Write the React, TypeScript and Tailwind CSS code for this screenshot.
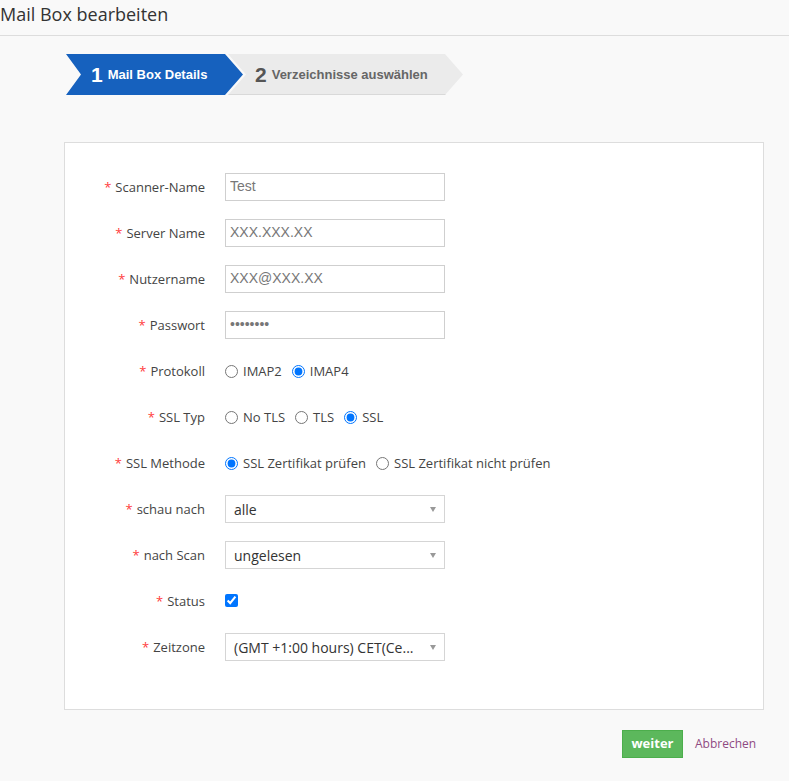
import React from "react";

const Star = () => <span className="text-[#ff3b3b] mr-[4px]">*</span>;

function Row({ label, children }: { label: string; children: React.ReactNode }) {
  return (
    <div className="flex items-center h-[28px]">
      <div className="w-[140px] text-right text-[13px] text-[#444] whitespace-nowrap pt-[2px]">
        <Star />
        {label}
      </div>
      <div className="ml-[20px] flex items-center">{children}</div>
    </div>
  );
}

function TextInput({ value, type = "text" }: { value: string; type?: string }) {
  return (
    <input
      type={type}
      defaultValue={value}
      className="w-[220px] h-[28px] border border-[#cfcfcf] bg-white px-[4px] pb-[2px] text-[14px] text-[#777] outline-none [font-family:'Liberation_Sans',Arial,sans-serif]"
    />
  );
}

function Select({ value }: { value: string }) {
  return (
    <div className="w-[220px] h-[28px] border border-[#d5d5d5] bg-white flex items-center pl-[8px] pr-[8px] text-[14px] text-[#333]">
      <span className="flex-1 truncate">{value}</span>
      <span className="w-0 h-0 border-l-[3.5px] border-r-[3.5px] border-t-[5px] border-l-transparent border-r-transparent border-t-[#999] ml-[6px]" />
    </div>
  );
}

function Radio({ label, checked }: { label: string; checked?: boolean }) {
  return (
    <label className="flex items-center mr-[10px] text-[13px] text-[#444]">
      <input type="radio" defaultChecked={checked} className="m-0 w-[13px] h-[13px] accent-[#0075ff]" />
      <span className="ml-[5px] pt-[1px]">{label}</span>
    </label>
  );
}

export default function App() {
  return (
    <div className="min-h-[781px] bg-[#f9f9f9] [font-family:'Open_Sans',sans-serif]">
      <div className="h-[36px] border-b border-[#dddddd]">
        <h1 className="text-[18px] leading-[28px] text-[#333]">Mail Box bearbeiten</h1>
      </div>

      <div className="flex ml-[66px] mt-[18px] h-[41px] [font-family:'Liberation_Sans',Arial,sans-serif] font-bold">
        <div className="relative z-10 w-[177px] h-[41px] bg-[#1661be] text-white flex items-center pl-[25px] [clip-path:polygon(0_0,159px_0,177px_50%,159px_100%,0_100%,15px_50%)]">
          <span className="text-[21px] leading-none">1</span>
          <span className="text-[13px] ml-[5px]">Mail Box Details</span>
        </div>
        <div className="relative -ml-[15px] w-[235px] h-[41px] bg-[#ebebeb] flex items-center pl-[27px] [clip-path:polygon(0_0,217px_0,235px_50%,217px_100%,0_100%,18px_50%)]">
          <span className="text-[21px] leading-none text-[#555]">2</span>
          <span className="text-[13px] ml-[5px] text-[#666]">Verzeichnisse auswählen</span>
          <div className="absolute left-0 right-0 bottom-0 h-px bg-[#d9d9d9]" />
        </div>
      </div>

      <div className="ml-[64px] mt-[47px] w-[700px] h-[568px] bg-white border border-[#dddddd] pt-[30px]">
        <div className="flex flex-col gap-[18px]">
          <Row label="Scanner-Name"><TextInput value="Test" /></Row>
          <Row label="Server Name"><TextInput value="XXX.XXX.XX" /></Row>
          <Row label="Nutzername"><TextInput value="XXX@XXX.XX" /></Row>
          <Row label="Passwort"><TextInput value="12345678" type="password" /></Row>
          <Row label="Protokoll">
            <Radio label="IMAP2" />
            <Radio label="IMAP4" checked />
          </Row>
          <Row label="SSL Typ">
            <Radio label="No TLS" />
            <Radio label="TLS" />
            <Radio label="SSL" checked />
          </Row>
          <Row label="SSL Methode">
            <Radio label="SSL Zertifikat prüfen" checked />
            <Radio label="SSL Zertifikat nicht prüfen" />
          </Row>
          <Row label="schau nach"><Select value="alle" /></Row>
          <Row label="nach Scan"><Select value="ungelesen" /></Row>
          <Row label="Status">
            <input type="checkbox" defaultChecked className="m-0 mb-[2px] w-[13px] h-[13px] accent-[#0075ff]" />
          </Row>
          <Row label="Zeitzone"><Select value="(GMT +1:00 hours) CET(Ce..." /></Row>
        </div>
      </div>

      <div className="flex items-center ml-[622px] mt-[20px]">
        <button className="w-[61px] h-[28px] bg-[#5cb85c] border border-[#4cae4c] text-white font-bold text-[13px]">
          weiter
        </button>
        <span className="ml-[12px] text-[12px] text-[#8f4a82]">Abbrechen</span>
      </div>
    </div>
  );
}
